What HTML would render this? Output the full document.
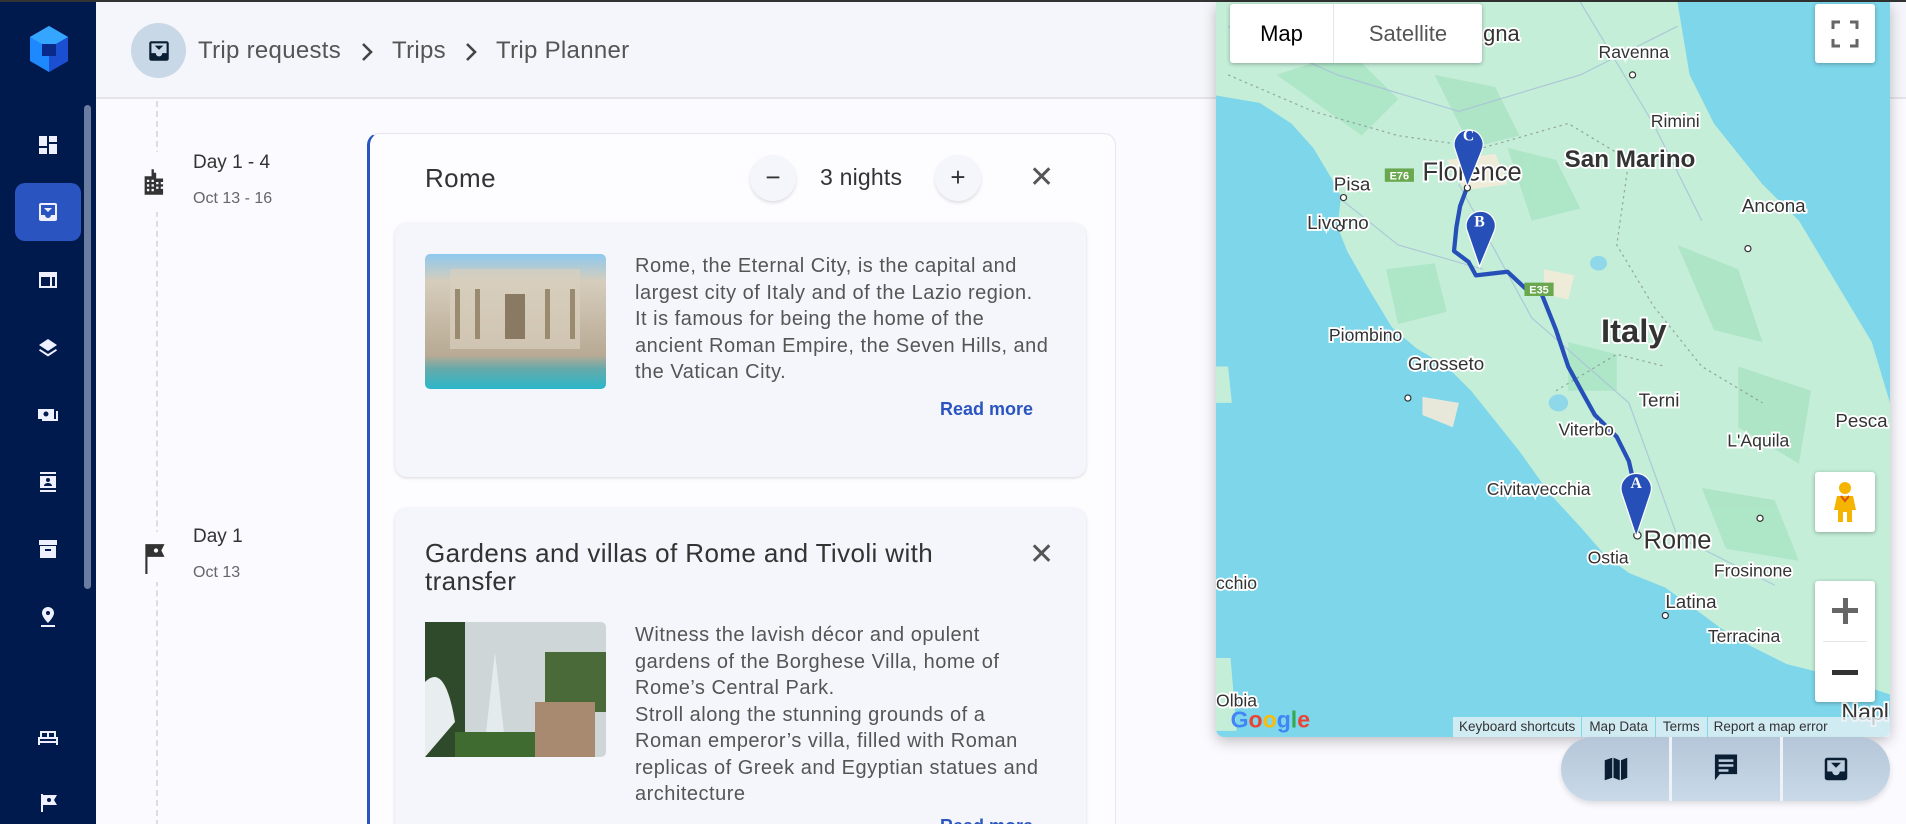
<!DOCTYPE html>
<html style="overflow:hidden;height:824px"><head><meta charset="utf-8"><style>
*{box-sizing:border-box;margin:0;padding:0}
body{width:1906px;height:824px;overflow:hidden;background:#fbfaff;font-family:"Liberation Sans",sans-serif;position:relative;border-top:2px solid #333}
.abs{position:absolute}
#side{left:0;top:0;width:96px;height:824px;background:#011a4d}
.ic{position:absolute;left:36px;width:24px;height:24px}
#hdr{left:96px;top:0;width:1810px;height:97px;background:#f5f6fb;border-bottom:2px solid #e4e4ea}
.bc{font-size:24px;color:#555;top:35px;letter-spacing:0.3px}
.card{background:#fdfcff;border:1px solid #e6e6ec;border-left:3px solid #2a55c0;border-radius:12px 12px 0 0}
.inner{background:#f5f6fb;border-radius:12px;box-shadow:0 1px 3px rgba(0,0,0,.15)}
.p{font-size:20px;line-height:26.5px;color:#555;letter-spacing:0.5px;white-space:nowrap}
.t{font-size:26px;color:#333;letter-spacing:0.4px}
.circ{width:46px;height:46px;border-radius:50%;background:#f5f6fb;box-shadow:0 2px 3px rgba(0,0,0,.12);text-align:center;line-height:44px;font-size:26px;color:#333}
.x{font-size:30px;color:#555}
.ctl{background:#fff;border-radius:3px;box-shadow:0 1px 4px rgba(0,0,0,.3)}
</style></head><body>
<div id="side" class="abs">
<svg class="abs" style="left:26px;top:22px" width="46" height="50" viewBox="0 0 46 50"><path d="M23 2 L42 13 L42 37 L23 48 L4 37 L4 13Z" fill="#1e88ff"/><path d="M23 2 L42 13 L23 24 L4 13Z" fill="#35a6ff"/><path d="M23 24 L42 13 L42 37 L23 48Z" fill="#1b4fd1"/><rect x="16" y="20" width="14" height="12" fill="#0a2a8a"/></svg>
<div class="abs" style="left:84px;top:103px;width:7px;height:484px;background:#6a7ca0;border-radius:4px"></div>
<svg class="ic" style="top:131px" viewBox="0 0 24 24"><path fill="#eef0ff" d="M3 13h8V3H3v10zm0 8h8v-6H3v6zm10 0h8V11h-8v10zm0-18v6h8V3h-8z"/></svg>
<div class="abs" style="left:15px;top:181px;width:66px;height:58px;background:#2a55c0;border-radius:10px"></div>
<svg class="ic" style="top:198px" viewBox="0 0 24 24"><path fill="#eef0ff" d="M5 3h14a2 2 0 012 2v14a2 2 0 01-2 2H5a2 2 0 01-2-2V5a2 2 0 012-2zm0 12h4a3 3 0 006 0h4V5H5v10zm3-7h8l-4 4z"/></svg>
<svg class="ic" style="top:266px" viewBox="0 0 24 24"><path fill="#eef0ff" d="M3 4h18v16H3zM5 9v9h9V9zm11 0v9h3V9z"/></svg>
<svg class="ic" style="top:333px" viewBox="0 0 24 24"><path fill="#eef0ff" d="M12 4l9 6-9 6-9-6zM4 14l8 5 8-5 1 1.5-9 6-9-6z"/></svg>
<svg class="ic" style="top:401px" viewBox="0 0 24 24"><path fill="#eef0ff" d="M2 6h16v10H2zm8 2.5a2.5 2.5 0 100 5 2.5 2.5 0 000-5zM20 8h2v10H6v-2h14z"/></svg>
<svg class="ic" style="top:468px" viewBox="0 0 24 24"><path fill="#eef0ff" d="M4 2h16v2H4zm0 18h16v2H4zM4 6h16v12H4zm8 2a2 2 0 100 4 2 2 0 000-4zm-4 8h8c0-2-2-3-4-3s-4 1-4 3z"/></svg>
<svg class="ic" style="top:535px" viewBox="0 0 24 24"><path fill="#eef0ff" d="M3 3h18v5H3zm1 6h16v12H4zm5 3v2h6v-2z"/></svg>
<svg class="ic" style="top:603px" viewBox="0 0 24 24"><path fill="#eef0ff" d="M12 2a6 6 0 016 6c0 4-6 10-6 10S6 12 6 8a6 6 0 016-6zm0 4a2 2 0 100 4 2 2 0 000-4zM5 20h14v2H5z"/></svg>
<svg class="ic" style="top:723px" viewBox="0 0 24 24"><path fill="#eef0ff" d="M4 6h16v6h2v8h-2v-2H4v2H2v-8h2zm2 2v4h5V8zm7 0v4h5V8zM4 14v2h16v-2z"/></svg>
<svg class="ic" style="top:789px" viewBox="0 0 24 24"><path fill="#eef0ff" d="M5 3h2v18H5zm2 1h14l-3 5 3 5H7zm6 3a2 2 0 100 4 2 2 0 000-4z"/></svg>
</div>
<div id="hdr" class="abs"></div>
<div class="abs" style="left:131px;top:21px;width:55px;height:55px;border-radius:50%;background:#c8d8e6"></div>
<svg class="abs" style="left:146px;top:36px" width="26" height="26" viewBox="0 0 24 24"><path fill="#0a1f33" d="M5 3h14a2 2 0 012 2v14a2 2 0 01-2 2H5a2 2 0 01-2-2V5a2 2 0 012-2zm0 11h4a3 3 0 006 0h4V5H5v9zm3-7h8l-4 4z"/></svg>
<div class="abs bc" style="left:198px">Trip requests</div>
<svg class="abs" style="left:360px;top:40px" width="14" height="20" viewBox="0 0 14 20"><path d="M3 2l8 8-8 8" stroke="#444" stroke-width="2.6" fill="none"/></svg>
<div class="abs bc" style="left:392px">Trips</div>
<svg class="abs" style="left:464px;top:40px" width="14" height="20" viewBox="0 0 14 20"><path d="M3 2l8 8-8 8" stroke="#444" stroke-width="2.6" fill="none"/></svg>
<div class="abs bc" style="left:496px">Trip Planner</div>

<div class="abs" style="left:156px;top:99px;height:725px;border-left:2px dashed #dcdce2"></div>
<div class="abs" style="left:136px;top:150px;width:40px;height:60px;background:#fbfaff"></div>
<svg class="abs" style="left:141px;top:165px" width="28" height="30" viewBox="0 0 24 26"><path fill="#333" d="M9 2h2v3h2v5h6v14H3V8h6zM5 11v2h2v-2zm4 0v2h2v-2zm4 2v2h2v-2zm4 0v2h2v-2zM5 15v2h2v-2zm4 0v2h2v-2zm4 2v2h2v-2zm4 0v2h2v-2zM5 19v2h2v-2zm4 0v2h2v-2z"/></svg>
<div class="abs" style="left:193px;top:150px;font-size:19px;color:#333">Day 1 - 4</div>
<div class="abs" style="left:193px;top:188px;font-size:16px;color:#666">Oct 13 - 16</div>
<div class="abs" style="left:136px;top:530px;width:40px;height:50px;background:#fbfaff"></div>
<svg class="abs" style="left:143px;top:540px" width="26" height="32" viewBox="0 0 24 30"><path fill="#333" d="M2 2h2v28H2zm2 0h16l-3 6 3 6H4zm8 4a2 2 0 100 4 2 2 0 000-4z"/></svg>
<div class="abs" style="left:193px;top:524px;font-size:19px;color:#333">Day 1</div>
<div class="abs" style="left:193px;top:562px;font-size:16px;color:#666">Oct 13</div>

<div class="abs card" style="left:367px;top:131px;width:749px;height:693px;border-bottom:none"></div>
<div class="abs t" style="left:425px;top:161px">Rome</div>
<div class="abs circ" style="left:750px;top:153px">−</div>
<div class="abs" style="left:820px;top:162px;font-size:23px;color:#333;letter-spacing:0.2px">3 nights</div>
<div class="abs circ" style="left:935px;top:153px">+</div>
<div class="abs x" style="left:1029px;top:158px">✕</div>
<div class="abs inner" style="left:395px;top:221px;width:691px;height:254px"></div>
<svg class="abs" style="left:425px;top:252px" width="181" height="135" viewBox="0 0 181 135"><defs><linearGradient id="s1" x1="0" y1="0" x2="0" y2="1"><stop offset="0" stop-color="#8ec9ee"/><stop offset=".2" stop-color="#d6cdbc"/><stop offset=".75" stop-color="#b8aa94"/><stop offset=".85" stop-color="#6aa"/><stop offset="1" stop-color="#2bb6c8"/></linearGradient></defs><rect width="181" height="135" rx="5" fill="url(#s1)"/><rect x="25" y="15" width="130" height="80" fill="#d9cfbd" opacity=".7"/><path d="M80 40h20v45H80z" fill="#8a7a64"/><g fill="#9a8a70"><rect x="30" y="35" width="5" height="50"/><rect x="50" y="35" width="5" height="50"/><rect x="120" y="35" width="5" height="50"/><rect x="145" y="35" width="5" height="50"/></g></svg>
<div class="abs p" style="left:635px;top:251px">Rome, the Eternal City, is the capital and<br>largest city of Italy and of the Lazio region.<br>It is famous for being the home of the<br>ancient Roman Empire, the Seven Hills, and<br>the Vatican City.</div>
<div class="abs" style="left:940px;top:397px;font-size:18px;font-weight:bold;color:#2a55c0">Read more</div>

<div class="abs inner" style="left:395px;top:506px;width:691px;height:330px"></div>
<div class="abs t" style="left:425px;top:537px;line-height:28px;white-space:nowrap">Gardens and villas of Rome and Tivoli with<br>transfer</div>
<div class="abs x" style="left:1029px;top:535px">✕</div>
<svg class="abs" style="left:425px;top:620px" width="181" height="135" viewBox="0 0 181 135"><rect width="181" height="135" rx="5" fill="#cfd6d8"/><path d="M0 0h40v135H0z" fill="#2f4a2a"/><path d="M120 30h61v60h-61z" fill="#4a6a3a"/><path d="M0 60 Q20 40 30 100 L0 135z" fill="#e8eef0"/><path d="M70 30 L80 120 L60 120z" fill="#e4eaee"/><path d="M110 80h60v55h-60z" fill="#a88a70"/><path d="M30 110h80v25H30z" fill="#3f6a30"/></svg>
<div class="abs p" style="left:635px;top:620px">Witness the lavish décor and opulent<br>gardens of the Borghese Villa, home of<br>Rome’s Central Park.<br>Stroll along the stunning grounds of a<br>Roman emperor’s villa, filled with Roman<br>replicas of Greek and Egyptian statues and<br>architecture</div>
<div class="abs" style="left:940px;top:814px;font-size:18px;font-weight:bold;color:#2a55c0">Read more</div>

<!-- map -->
<div class="abs" style="left:1216px;top:0;width:674px;height:735px;overflow:hidden;box-shadow:0 4px 14px rgba(0,0,0,.25);border-radius:0 0 8px 8px">
<svg width="674" height="735" viewBox="1000 0 555 605" preserveAspectRatio="none" font-family="Liberation Sans, sans-serif">
<rect x="1000" y="0" width="555" height="605" fill="#7dd6ea"/>
<path d="M1000 0H1380L1390 60L1410 100L1450 150L1480 180L1510 230L1540 280L1555 330V570L1510 555L1470 545L1440 530L1415 515L1395 500L1370 482L1340 470L1320 455L1300 432L1275 405L1250 370L1230 345L1210 320L1190 300L1165 285L1145 268L1125 235L1108 205L1100 185L1103 160L1095 145L1080 120L1062 100L1036 83L1000 77Z" fill="#c4eed8"/>
<g fill="#a9e3c4" opacity=".8"><path d="M1050 60l60 -20 40 40 -30 30z"/><path d="M1240 120l40 10 20 40 -40 10z"/><path d="M1380 200l50 20 20 60 -40 -10z"/><path d="M1140 220l40 -5 10 40 -40 10z"/><path d="M1430 300l60 20 -10 60 -50 -30z"/><path d="M1290 280l40 10 0 30 -40 0z"/><path d="M1400 400l60 10 20 50 -60 -10z"/><path d="M1180 60l50 10 20 40 -40 10z"/></g>
<g fill="#f3ead8" opacity=".9"><path d="M1190 130l40 -5 10 25 -35 5z"/><path d="M1270 220l25 5 -5 20 -20 -5z"/><path d="M1170 325l30 5 -5 20 -25 -10z"/></g>
<path d="M1000 300h10l3 30h-13z" fill="#c4eed8"/><path d="M1000 540h12l5 60h-17z" fill="#c4eed8"/>
<g fill="#8fd8ea"><ellipse cx="1315" cy="215" rx="7" ry="6"/><ellipse cx="1282" cy="330" rx="8" ry="7"/></g>
<g stroke="#a9bfd8" stroke-width="1" fill="none" opacity=".8"><path d="M1010 20L1100 60 1200 90 1300 60 1380 20"/><path d="M1200 150L1260 260 1340 330 1380 440 1460 480"/><path d="M1100 160L1150 200 1220 220"/><path d="M1300 0L1360 100 1400 180"/></g>
<g stroke="#777" stroke-width="1" stroke-dasharray="2 3" fill="none" opacity=".6"><path d="M1010 60L1080 90 1150 110 1220 120 1290 100 1340 130"/><path d="M1340 130L1330 200 1360 250 1400 300 1450 330"/><path d="M1280 320L1330 290 1370 300"/></g>
<path d="M1207 152L1201 168 1198 185 1196 205 1208 214 1214 225 1240 222 1255 236 1268 240 1280 270 1290 300 1302 322 1312 340 1330 358 1340 378 1345 400 1347 440" stroke="#2650b8" stroke-width="3.5" fill="none" stroke-linejoin="round"/>
<rect x="1139" y="137" width="24" height="11" fill="#6aa84f"/><text x="1151" y="146" font-size="9" fill="#fff" text-anchor="middle" font-weight="bold">E76</text>
<rect x="1254" y="231" width="24" height="11" fill="#6aa84f"/><text x="1266" y="240" font-size="9" fill="#fff" text-anchor="middle" font-weight="bold">E35</text>
<g font-size="14.5" fill="#333" stroke="#fff" stroke-width="3" paint-order="stroke">
<text x="1220" y="32" font-size="18">gna</text>
<text x="1315" y="46">Ravenna</text><text x="1358" y="103">Rimini</text>
<text x="1097" y="155" font-size="15.5">Pisa</text><text x="1075" y="187" font-size="15.5">Livorno</text>
<text x="1433" y="173" font-size="15.5">Ancona</text>
<text x="1093" y="279">Piombino</text><text x="1158" y="303" font-size="15.5">Grosseto</text>
<text x="1348" y="333" font-size="15.5">Terni</text><text x="1282" y="357">Viterbo</text>
<text x="1510" y="350" font-size="15.5">Pesca</text><text x="1421" y="366">L'Aquila</text>
<text x="1223" y="406">Civitavecchia</text><text x="1306" y="462">Ostia</text>
<text x="1410" y="473">Frosinone</text><text x="1370" y="499" font-size="15.5">Latina</text><text x="1405" y="527">Terracina</text>
<text x="1000" y="483">cchio</text><text x="1000" y="580">Olbia</text>
<text x="1515" y="591" font-size="19">Napl</text>
<text x="1170" y="147" font-size="21">Florence</text>
<text x="1287" y="136" font-size="20" font-weight="bold">San Marino</text>
<text x="1317" y="280" font-size="27" font-weight="bold">Italy</text>
<text x="1352" y="450" font-size="21">Rome</text>
</g>
<g fill="#fff" stroke="#333" stroke-width="1"><circle cx="1207" cy="153" r="2.5"/><circle cx="1347" cy="439" r="3"/><circle cx="1105" cy="161" r="2.5"/><circle cx="1102" cy="186" r="2.5"/><circle cx="1343" cy="60" r="2.5"/><circle cx="1438" cy="203" r="2.5"/><circle cx="1158" cy="326" r="2.5"/><circle cx="1448" cy="425" r="2.5"/><circle cx="1370" cy="505" r="2.5"/></g>
<g fill="#2650b8" stroke="#fff" stroke-width="1"><path d="M1207 152L1197 122A12 12 0 1 1 1219 122Z"/><path d="M1217 218L1207 189A12 12 0 1 1 1229 189Z"/><path d="M1346 440L1334 404A12.5 12.5 0 1 1 1358 404Z"/></g>
<g font-family="Liberation Serif,serif" font-weight="bold" font-size="13" fill="#fff" text-anchor="middle"><text x="1208" y="114">C</text><text x="1217" y="185">B</text><text x="1346" y="400">A</text></g>
<text x="1012" y="597" font-size="19" font-weight="bold"><tspan fill="#4285f4">G</tspan><tspan fill="#ea4335">o</tspan><tspan fill="#fbbc05">o</tspan><tspan fill="#4285f4">g</tspan><tspan fill="#34a853">l</tspan><tspan fill="#ea4335">e</tspan></text>
</svg>
</div>
<div class="abs ctl" style="left:1230px;top:2px;width:252px;height:59px;display:flex;font-size:22px;font-family:'Liberation Sans',sans-serif">
<div style="width:104px;text-align:center;line-height:59px;color:#000;border-right:1px solid #e6e6e6">Map</div>
<div style="flex:1;text-align:center;line-height:59px;color:#555">Satellite</div></div>
<div class="abs ctl" style="left:1815px;top:2px;width:60px;height:59px"><svg style="position:absolute;left:16px;top:16px" width="28" height="28" viewBox="0 0 28 28"><path d="M2 9V2h7M19 2h7v7M26 19v7h-7M9 26H2v-7" stroke="#666" stroke-width="3" fill="none"/></svg></div>
<div class="abs ctl" style="left:1815px;top:470px;width:60px;height:60px"><svg style="position:absolute;left:16px;top:8px" width="28" height="44" viewBox="0 0 28 44"><circle cx="14" cy="8" r="6" fill="#f5b400"/><path d="M6 16h16l3 14h-4v12h-5V32h-4v10H7V30H3z" fill="#f5b400"/><path d="M10 16l4 5 4-5" stroke="#d9521a" stroke-width="2" fill="none"/></svg></div>
<div class="abs ctl" style="left:1815px;top:579px;width:60px;height:121px"><div style="position:absolute;left:17px;top:27px;width:26px;height:5px;background:#666"></div><div style="position:absolute;left:27.5px;top:17px;width:5px;height:26px;background:#666"></div><div style="position:absolute;left:8px;top:60px;width:44px;height:1px;background:#e6e6e6"></div><div style="position:absolute;left:17px;top:89px;width:26px;height:5px;background:#333"></div></div>
<div class="abs" style="left:1453px;top:715px;width:437px;height:20px;display:flex;font-size:13.5px;color:#333;line-height:20px">
<div style="background:rgba(230,240,245,.8);padding:0 6px;border-right:1px solid #7dd6ea">Keyboard shortcuts</div>
<div style="background:rgba(230,240,245,.8);padding:0 7px;border-right:1px solid #7dd6ea">Map Data</div>
<div style="background:rgba(230,240,245,.8);padding:0 7px;border-right:1px solid #7dd6ea">Terms</div>
<div style="background:rgba(230,240,245,.8);padding:0 6px;flex:1;white-space:nowrap;overflow:hidden">Report a map error</div></div>

<div class="abs" style="left:1561px;top:735px;width:329px;height:64px;background:linear-gradient(#b4c6d8,#c9d9e8);box-shadow:0 3px 6px rgba(0,0,0,.12);border-radius:32px;overflow:hidden">
<div class="abs" style="left:108px;top:0;width:3px;height:64px;background:#eef2f8"></div>
<div class="abs" style="left:219px;top:0;width:3px;height:64px;background:#eef2f8"></div>
<svg class="abs" style="left:40px;top:17px" width="30" height="30" viewBox="0 0 24 24"><path fill="#0a1f33" d="M3 5l6-2v16l-6 2zm7-2l5 2v16l-5-2zm6 2l5-2v16l-5 2z"/></svg>
<svg class="abs" style="left:150px;top:15px" width="30" height="32" viewBox="0 0 24 26"><path fill="#0a1f33" d="M3 2h18v16H7l-4 5zm3 4v2h12V6zm0 4v2h12v-2zm0 4v2h8v-2z"/></svg>
<svg class="abs" style="left:260px;top:17px" width="30" height="30" viewBox="0 0 24 24"><path fill="#0a1f33" d="M5 3h14a2 2 0 012 2v14a2 2 0 01-2 2H5a2 2 0 01-2-2V5a2 2 0 012-2zm0 11h4a3 3 0 006 0h4V5H5v9zm3-7h8l-4 4z"/></svg>
</div>
</body></html>
